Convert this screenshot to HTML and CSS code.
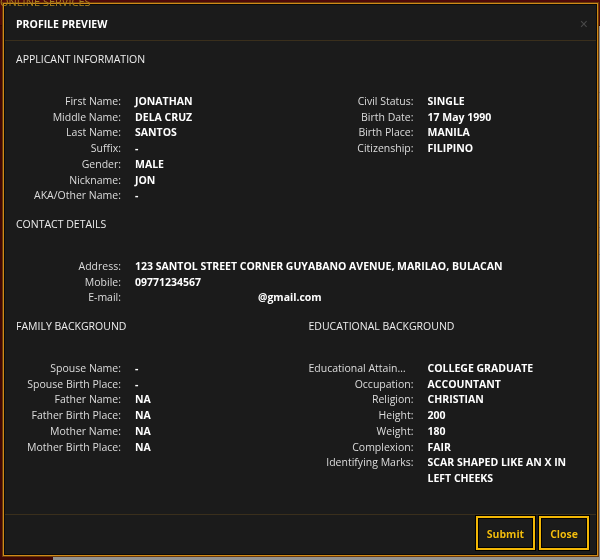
FILE: index.html
```html
<!DOCTYPE html>
<html lang="en">
<head>
  <meta charset="UTF-8" />
  <meta name="viewport" content="width=device-width, initial-scale=1.0"/>
  <title>Online Services - Profile Preview</title>
  <link rel="stylesheet" href="styles.css">
</head>
<body>

<header class="topbar">
  <span class="brand">ONLINE SERVICES</span>
</header>

<div class="page">
  <aside class="sidebar"></aside>
  <main class="content">
    <div class="table-line"></div>
    <div class="table-line"></div>
    <div class="table-line"></div>
    <div class="table-line"></div>
    <div class="table-line"></div>
    <div class="table-line"></div>
    <div class="table-line"></div>
  </main>
</div>

<!-- Vista previa del perfil -->
<div class="modal" role="dialog" aria-labelledby="modalTitle">
  <div class="modal-header">
    <h4 id="modalTitle" class="modal-title">PROFILE PREVIEW</h4>
    <button class="modal-x" title="Close">&times;</button>
  </div>

  <div class="modal-body">
    <section class="block">
      <h5 class="block-title">APPLICANT INFORMATION</h5>
      <div class="cols">
        <dl class="info">
          <dt>First Name:</dt><dd>JONATHAN</dd>
          <dt>Middle Name:</dt><dd>DELA CRUZ</dd>
          <dt>Last Name:</dt><dd>SANTOS</dd>
          <dt>Suffix:</dt><dd>-</dd>
          <dt>Gender:</dt><dd>MALE</dd>
          <dt>Nickname:</dt><dd>JON</dd>
          <dt>AKA/Other Name:</dt><dd>-</dd>
        </dl>
        <dl class="info">
          <dt>Civil Status:</dt><dd>SINGLE</dd>
          <dt>Birth Date:</dt><dd>17 May 1990</dd>
          <dt>Birth Place:</dt><dd>MANILA</dd>
          <dt>Citizenship:</dt><dd>FILIPINO</dd>
        </dl>
      </div>
    </section>

    <section class="block">
      <h5 class="block-title">CONTACT DETAILS</h5>
      <dl class="info">
        <dt>Address:</dt><dd>123 SANTOL STREET CORNER GUYABANO AVENUE, MARILAO, BULACAN</dd>
        <dt>Mobile:</dt><dd>09771234567</dd>
        <dt>E-mail:</dt><dd class="email">@gmail.com</dd>
      </dl>
    </section>

    <div class="cols">
      <section class="block">
        <h5 class="block-title">FAMILY BACKGROUND</h5>
        <dl class="info">
          <dt>Spouse Name:</dt><dd>-</dd>
          <dt>Spouse Birth Place:</dt><dd>-</dd>
          <dt>Father Name:</dt><dd>NA</dd>
          <dt>Father Birth Place:</dt><dd>NA</dd>
          <dt>Mother Name:</dt><dd>NA</dd>
          <dt>Mother Birth Place:</dt><dd>NA</dd>
        </dl>
      </section>
      <section class="block">
        <h5 class="block-title">EDUCATIONAL BACKGROUND</h5>
        <dl class="info">
          <dt>Educational Attainment:</dt><dd>COLLEGE GRADUATE</dd>
          <dt>Occupation:</dt><dd>ACCOUNTANT</dd>
          <dt>Religion:</dt><dd>CHRISTIAN</dd>
          <dt>Height:</dt><dd>200</dd>
          <dt>Weight:</dt><dd>180</dd>
          <dt>Complexion:</dt><dd>FAIR</dd>
          <dt>Identifying Marks:</dt><dd>SCAR SHAPED LIKE AN X IN LEFT CHEEKS</dd>
        </dl>
      </section>
    </div>
  </div>

  <div class="modal-footer">
    <button class="btn">Submit</button>
    <button class="btn">Close</button>
  </div>
</div>

</body>
</html>
```

FILE: styles.css
```css
    * {
      box-sizing: border-box;
    }

    body {
      font-family: 'Open Sans', 'Segoe UI', sans-serif;
      font-size: 10.5px;
      line-height: 15.7px;
      margin: 0;
      padding: 0;
      height: 560px;
      overflow: hidden;
      background: #8e8e8e;
      display: flex;
      flex-direction: column;
    }

    /* Pagina de fondo */
    .topbar {
      background: #4e0a08;
      height: 26px;
      padding-left: 0;
      border-bottom: 1px solid #2e0403;
    }

    .brand {
      display: block;
      position: relative;
      z-index: 2;
      color: #a8801e;
      font-size: 11px;
      line-height: 12px;
      margin-top: -4px;
    }

    .page {
      flex: 1;
      display: flex;
    }

    .sidebar {
      width: 53px;
      background: #3f0806;
    }

    .content {
      flex: 1;
      background: #929292;
      padding-top: 40px;
    }

    .table-line {
      height: 27px;
      border-bottom: 1px solid #7c7c7c;
    }

    /* Ventana modal */
    .modal {
      position: fixed;
      top: 4px;
      left: 4px;
      width: 593px;
      height: 551px;
      background: #1b1b1b;
      border: 1px solid #0a0a0a;
      outline: 1px solid #d08a18;
      box-shadow: 0 0 0 2px #6a3a0a;
      display: flex;
      flex-direction: column;
      color: #e4e4e4;
    }

    .modal-header {
      display: flex;
      align-items: center;
      justify-content: space-between;
      padding: 11px 8px 8px 11px;
      border-bottom: 1px solid #3a2f1c;
    }

    .modal-title {
      margin: 0;
      font-size: 10.5px;
      font-weight: 700;
      color: #fff;
      line-height: 16px;
    }

    .modal-x {
      background: none;
      border: none;
      padding: 0;
      color: #4a4a4a;
      font-size: 14px;
      line-height: 14px;
      cursor: pointer;
    }

    .modal-body {
      flex: 1;
      padding: 10px 11px 0;
    }

    .block {
      margin-bottom: 12px;
    }

    .block-title {
      margin: 0 0 27px;
      font-size: 10.5px;
      font-weight: 400;
      line-height: 16px;
      color: #eee;
    }

    .cols {
      display: grid;
      grid-template-columns: 1fr 1fr;
      column-gap: 16px;
      align-items: start;
    }

    .cols .block,
    .cols .info {
      margin-bottom: 0;
    }

    .info {
      display: grid;
      grid-template-columns: 105px 1fr;
      column-gap: 14px;
      margin: 0;
    }

    .info dt {
      text-align: right;
      white-space: nowrap;
      overflow: hidden;
      text-overflow: ellipsis;
      color: #dcdcdc;
    }

    .info dd {
      margin: 0;
      font-weight: 700;
      color: #fff;
    }

    .info dd.email {
      padding-left: 123px;
    }

    .modal-footer {
      display: flex;
      justify-content: flex-end;
      gap: 4px;
      padding: 1px 7px 4px;
      border-top: 1px solid #3a2f1c;
    }

    .btn {
      font-family: inherit;
      font-size: 10.5px;
      font-weight: 700;
      line-height: 16px;
      color: #f2bd10;
      background: #1b1b1b;
      border: 2px solid #f2b705;
      box-shadow: 0 0 0 1px #000, inset 0 0 0 1px #000;
      padding: 8px 9px;
      height: 34px;
      cursor: pointer;
      text-shadow: 0 0 1px #000;
    }
```
